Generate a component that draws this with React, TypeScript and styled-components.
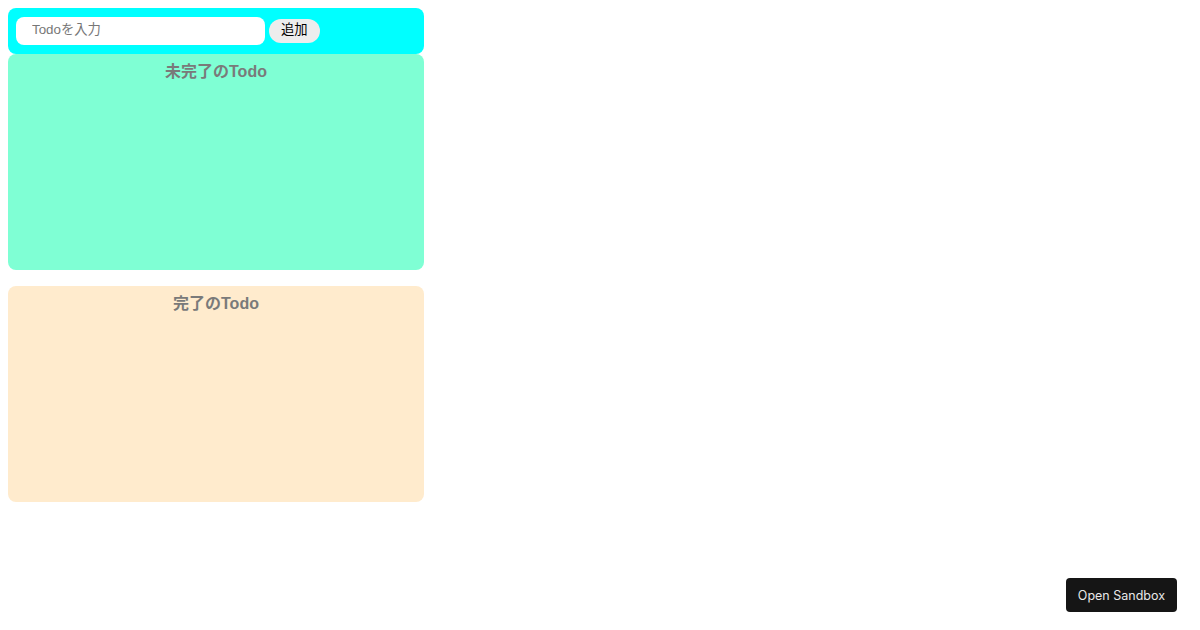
import * as React from "react";
import styled, { createGlobalStyle } from "styled-components";

const GlobalStyle = createGlobalStyle`
  body {
    margin: 8px;
    background: #ffffff;
    font-family: "Liberation Sans", Arial, "Noto Sans CJK JP", sans-serif;
  }
`;

const InputArea = styled.div`
  display: flex;
  align-items: center;
  gap: 4px;
  width: 400px;
  height: 30px;
  padding: 8px;
  background-color: #00ffff;
  border-radius: 8px;
`;

const TodoInput = styled.input`
  box-sizing: border-box;
  width: 249px;
  height: 28px;
  padding: 4px 16px 8px;
  border: none;
  border-radius: 8px;
  outline: none;
  font-family: "Liberation Sans", Arial, "Noto Sans CJK JP", sans-serif;
  font-size: 13.33px;
  line-height: 16px;
  &::placeholder {
    color: #777777;
  }
`;

const AddButton = styled.button`
  height: 24px;
  padding: 0 12px 2px;
  border: none;
  border-radius: 16px;
  background-color: #ededed;
  color: #000000;
  font-family: "Liberation Sans", Arial, "Noto Sans CJK JP", sans-serif;
  font-size: 13.33px;
  line-height: 16px;
  cursor: pointer;
`;

const Area = styled.div<{ $bg: string; $gap: number }>`
  width: 400px;
  min-height: 200px;
  padding: 8px;
  margin-top: ${(p) => p.$gap}px;
  background-color: ${(p) => p.$bg};
  border-radius: 8px;
`;

const Title = styled.p`
  margin: 0;
  padding-top: 1px;
  text-align: center;
  font-size: 16px;
  font-weight: bold;
  line-height: 18px;
  color: #7a7a7a;
`;

const SandboxButton = styled.button`
  position: fixed;
  right: 23px;
  bottom: 18px;
  height: 34px;
  padding: 0 12px;
  border: none;
  border-radius: 4px;
  background-color: #151515;
  color: #e8e8e8;
  font-family: Inter, "Liberation Sans", sans-serif;
  font-size: 12.5px;
  cursor: pointer;
`;

const App: React.FC = () => {
  const [todoText, setTodoText] = React.useState("");

  return (
    <>
      <GlobalStyle />
      <InputArea>
        <TodoInput
          placeholder="Todoを入力"
          value={todoText}
          onChange={(e) => setTodoText(e.target.value)}
        />
        <AddButton>追加</AddButton>
      </InputArea>
      <Area $bg="#7fffd4" $gap={0}>
        <Title>未完了のTodo</Title>
      </Area>
      <Area $bg="#ffebcd" $gap={16}>
        <Title>完了のTodo</Title>
      </Area>
      <SandboxButton>Open Sandbox</SandboxButton>
    </>
  );
};

export default App;
